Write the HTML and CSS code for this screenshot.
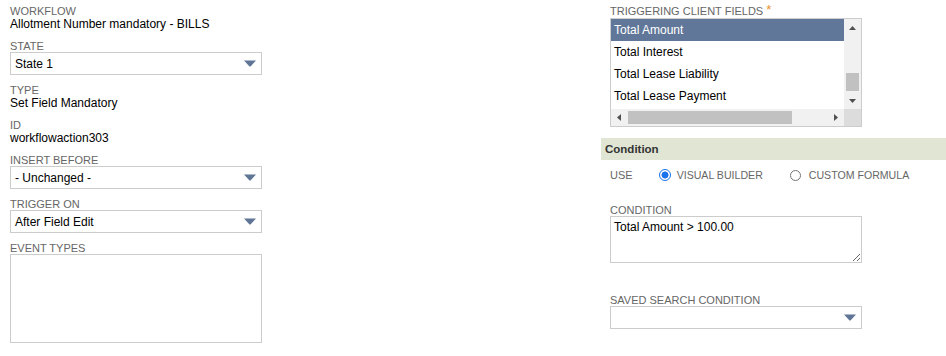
FILE: index.html
```html
<!DOCTYPE html>
<html lang="en">

<head>
    <meta charset="UTF-8">
    <meta name="viewport" content="width=device-width, initial-scale=1.0">
    <title>Workflow Action</title>
    <link rel="stylesheet" href="styles.css">
</head>

<body>
    <div class="page">
        <div class="col-left">
            <div class="field">
                <div class="label">Workflow</div>
                <div class="value">Allotment Number mandatory - BILLS</div>
            </div>
            <div class="field">
                <div class="label">State</div>
                <div class="select"><span>State 1</span><svg class="caret" width="12" height="7" viewBox="0 0 12 7"><path d="M0 0.5H12L6.5 6.5H5.5Z" /></svg></div>
            </div>
            <div class="field">
                <div class="label">Type</div>
                <div class="value">Set Field Mandatory</div>
            </div>
            <div class="field">
                <div class="label">ID</div>
                <div class="value">workflowaction303</div>
            </div>
            <div class="field">
                <div class="label">Insert Before</div>
                <div class="select"><span>- Unchanged -</span><svg class="caret" width="12" height="7" viewBox="0 0 12 7"><path d="M0 0.5H12L6.5 6.5H5.5Z" /></svg></div>
            </div>
            <div class="field">
                <div class="label">Trigger On</div>
                <div class="select"><span>After Field Edit</span><svg class="caret" width="12" height="7" viewBox="0 0 12 7"><path d="M0 0.5H12L6.5 6.5H5.5Z" /></svg></div>
            </div>
            <div class="field">
                <div class="label">Event Types</div>
                <div class="multi"></div>
            </div>
        </div>

        <div class="col-right">
            <div class="field">
                <div class="label">Triggering Client Fields <span class="req">*</span></div>
                <div class="listbox">
                    <div class="options">
                        <div class="option selected">Total Amount</div>
                        <div class="option">Total Interest</div>
                        <div class="option">Total Lease Liability</div>
                        <div class="option">Total Lease Payment</div>
                    </div>
                    <div class="vscroll">
                        <svg width="17" height="17" viewBox="0 0 17 17"><path d="M5 11H12L8.5 7Z" /></svg>
                        <div class="vthumb"></div>
                        <svg width="17" height="17" viewBox="0 0 17 17"><path d="M5 7H12L8.5 11Z" /></svg>
                    </div>
                    <div class="hscroll">
                        <svg width="17" height="17" viewBox="0 0 17 17"><path d="M10 5V12L6 8.5Z" /></svg>
                        <div class="hthumb"></div>
                        <svg width="17" height="17" viewBox="0 0 17 17"><path d="M7 5V12L11 8.5Z" /></svg>
                    </div>
                    <div class="corner"></div>
                </div>
            </div>

            <div class="section-head">Condition</div>

            <div class="use-row">
                <span class="label">Use</span>
                <span class="radio checked"></span><span class="label opt">Visual Builder</span>
                <span class="radio"></span><span class="label opt">Custom Formula</span>
            </div>

            <div class="field cond">
                <div class="label">Condition</div>
                <textarea class="formula">Total Amount &gt; 100.00</textarea>
            </div>

            <div class="field saved">
                <div class="label">Saved Search Condition</div>
                <div class="select"><span></span><svg class="caret" width="12" height="7" viewBox="0 0 12 7"><path d="M0 0.5H12L6.5 6.5H5.5Z" /></svg></div>
            </div>
        </div>
    </div>
</body>

</html>
```

FILE: styles.css
```css
body {
    margin: 0;
    font-family: 'Liberation Sans', Arial, sans-serif;
    font-size: 12px;
    color: #000;
    background: #fff;
}

.page {
    display: flex;
    padding: 5px 0 0 10px;
}

.col-left {
    width: 252px;
    display: flex;
    flex-direction: column;
    gap: 9px;
}

.col-right {
    width: 345px;
    margin-left: auto;
    display: flex;
    flex-direction: column;
}

.col-right .field {
    margin-left: 9px;
    width: 252px;
}

.label {
    font-size: 11px;
    line-height: 12px;
    color: #666;
    text-transform: uppercase;
}

.value {
    line-height: 14px;
}

.req {
    color: #e8912d;
    font-size: 13px;
    vertical-align: top;
    line-height: 10px;
}

.select {
    box-sizing: border-box;
    height: 23px;
    border: 1px solid #ccc;
    display: flex;
    align-items: center;
    justify-content: space-between;
    padding: 0 5px 0 4px;
}

.caret {
    fill: #5f7595;
    margin-top: -1px;
}

.multi {
    box-sizing: border-box;
    height: 89px;
    border: 1px solid #ccc;
}

/* listbox */
.listbox {
    box-sizing: border-box;
    margin-top: 1px;
    height: 109px;
    border: 1px solid #ccc;
    display: grid;
    grid-template-columns: 1fr 17px;
    grid-template-rows: 90px 17px;
}

.options {
    overflow: hidden;
}

.option {
    height: 22px;
    line-height: 22px;
    padding-left: 3px;
    white-space: nowrap;
}

.option.selected {
    background: #607799;
    color: #fff;
}

.vscroll {
    background: #f1f1f1;
    display: flex;
    flex-direction: column;
}

.vscroll svg,
.hscroll svg {
    fill: #505050;
    flex-shrink: 0;
}

.vthumb {
    width: 13px;
    height: 18px;
    margin: 37px 0 0 2px;
    background: #c1c1c1;
}

.vscroll svg:last-child {
    margin-top: auto;
}

.hscroll {
    background: #f1f1f1;
    display: flex;
    align-items: center;
}

.hthumb {
    width: 164px;
    height: 13px;
    background: #c1c1c1;
}

.hscroll svg:last-child {
    margin-left: auto;
}

.corner {
    background: #dcdcdc;
}

/* condition section */
.section-head {
    margin-top: 11px;
    height: 22px;
    line-height: 22px;
    background: #e0e6d3;
    padding-left: 4px;
    font-weight: bold;
    font-size: 11.5px;
    color: #333;
}

.use-row {
    display: flex;
    align-items: center;
    margin: 7px 0 0 9px;
    height: 16px;
}

.use-row .label {
    line-height: 16px;
}

.use-row .opt {
    font-size: 10.6px;
}

.use-row .label:first-child {
    margin-right: 26px;
}

.radio {
    box-sizing: border-box;
    width: 12px;
    height: 12px;
    border-radius: 50%;
    border: 1px solid #767676;
    margin-right: 6px;
}

.radio.checked {
    border: 1.5px solid #1a73e8;
    background: radial-gradient(circle, #1a73e8 0 3.2px, #fff 3.8px);
}

.radio:not(.checked) {
    margin-left: 27px;
    width: 11px;
    height: 11px;
    margin-right: 8px;
}

.cond {
    margin-top: 21px;
}

.formula {
    display: block;
    box-sizing: border-box;
    width: 252px;
    height: 47px;
    margin: 0;
    border: 1px solid #ccc;
    padding: 3px 3px;
    font-family: 'Liberation Sans', Arial, sans-serif;
    font-size: 12px;
    line-height: 14px;
    color: #000;
    outline: none;
}

.saved {
    margin-top: 31px;
}
```
